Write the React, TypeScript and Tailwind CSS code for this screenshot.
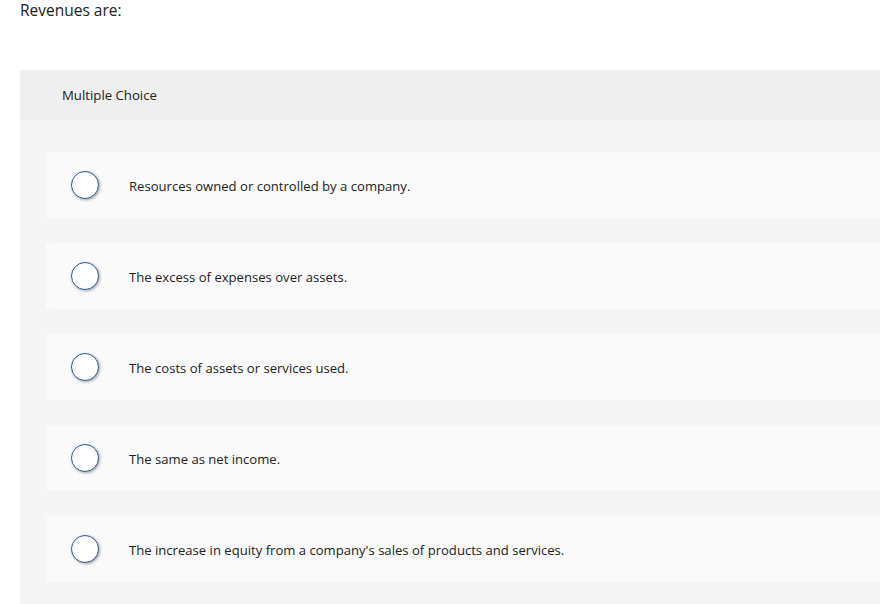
import React from "react";

const options = [
  "Resources owned or controlled by a company.",
  "The excess of expenses over assets.",
  "The costs of assets or services used.",
  "The same as net income.",
  "The increase in equity from a company's sales of products and services.",
];

export default function App() {
  return (
    <div
      className="w-[880px] h-[604px] overflow-hidden bg-white text-[#1a1a1a]"
      style={{ fontFamily: '"Open Sans", "Liberation Sans", sans-serif' }}
    >
      <div className="pl-[20px] h-[70px] text-[15.5px] leading-[20px] text-[#222]">Revenues are:</div>
      <div className="ml-[20px] w-[900px] h-[560px] bg-[#f5f5f5]">
        <div className="h-[50px] bg-[#efefef] flex items-center pl-[42px] pt-[2px] text-[13.2px] text-[#222]">
          Multiple Choice
        </div>
        <div className="pt-[32px] pl-[26px] flex flex-col gap-[25px]">
          {options.map((o) => (
            <div key={o} className="h-[66px] bg-[#fafafa] rounded-[3px] flex items-center">
              <div className="ml-[25px] w-[28px] h-[28px] rounded-full border-[1.5px] border-[#2c5e98] bg-white shadow-[1px_1px_3px_rgba(0,0,0,0.35)]" />
              <div className="ml-[30px] pt-[3px] text-[13.1px] text-[#222]">{o}</div>
            </div>
          ))}
        </div>
      </div>
    </div>
  );
}
